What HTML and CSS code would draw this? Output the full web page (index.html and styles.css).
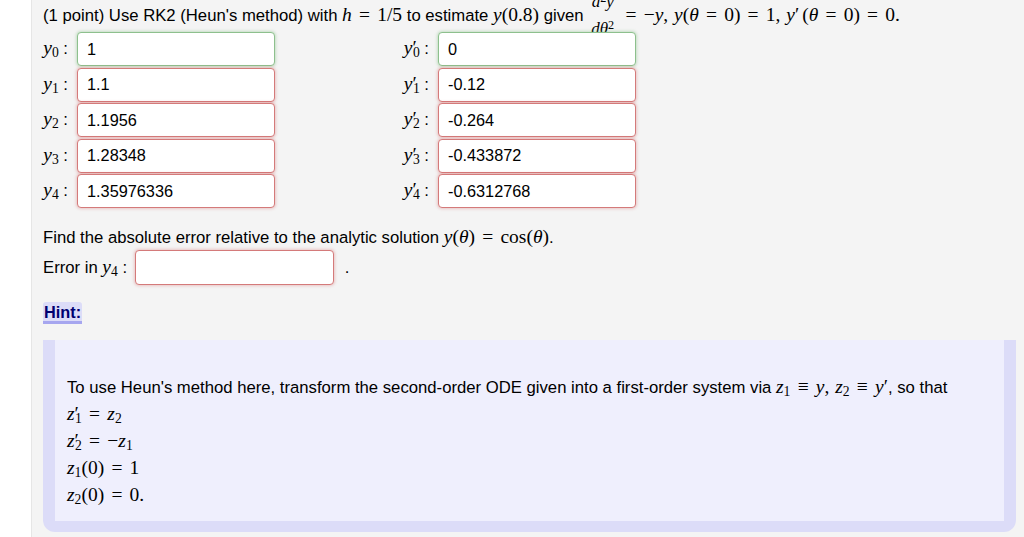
FILE: index.html
```html
<!DOCTYPE html>
<html>
<head>
<meta charset="utf-8">
<link rel="stylesheet" href="styles.css">
</head>
<body>
<div class="page">
  <p class="title">(1 point) Use RK2 (Heun's method) with <span class="m"><i>h</i><span class="rel">=</span>1/5</span> to estimate <span class="m"><i>y</i>(0.8)</span> given <span class="frac"><span><i>d</i><span class="sup">2</span><i>y</i></span><span><i>dθ</i><span class="sup">2</span></span></span><span class="m"><span class="rel">=</span>−<i>y</i>,<span class="th"></span><i>y</i>(<i>θ</i><span class="rel">=</span>0)<span class="rel">=</span>1,<span class="th"></span><i>y</i><span class="pm">′</span>(<i>θ</i><span class="rel">=</span>0)<span class="rel">=</span>0.</span></p>

  <div class="grid">
    <div class="lab"><span class="m"><i>y</i><span class="sub">0</span></span> :</div>
    <input class="fld ok" type="text" value="1">
    <div class="lab"><span class="m"><i>y</i>′<span class="sub pr">0</span></span> :</div>
    <input class="fld ok" type="text" value="0">

    <div class="lab"><span class="m"><i>y</i><span class="sub">1</span></span> :</div>
    <input class="fld bad" type="text" value="1.1">
    <div class="lab"><span class="m"><i>y</i>′<span class="sub pr">1</span></span> :</div>
    <input class="fld bad" type="text" value="-0.12">

    <div class="lab"><span class="m"><i>y</i><span class="sub">2</span></span> :</div>
    <input class="fld bad" type="text" value="1.1956">
    <div class="lab"><span class="m"><i>y</i>′<span class="sub pr">2</span></span> :</div>
    <input class="fld bad" type="text" value="-0.264">

    <div class="lab"><span class="m"><i>y</i><span class="sub">3</span></span> :</div>
    <input class="fld bad" type="text" value="1.28348">
    <div class="lab"><span class="m"><i>y</i>′<span class="sub pr">3</span></span> :</div>
    <input class="fld bad" type="text" value="-0.433872">

    <div class="lab"><span class="m"><i>y</i><span class="sub">4</span></span> :</div>
    <input class="fld bad" type="text" value="1.35976336">
    <div class="lab"><span class="m"><i>y</i>′<span class="sub pr">4</span></span> :</div>
    <input class="fld bad" type="text" value="-0.6312768">
  </div>

  <p class="find">Find the absolute error relative to the analytic solution <span class="m"><i>y</i>(<i>θ</i>)<span class="rel">=</span>cos(<i>θ</i>)</span>.</p>
  <p class="err">Error in <span class="m"><i>y</i><span class="sub">4</span></span> : <input class="fld bad wide" type="text" value=""><span class="dot">.</span></p>

  <div class="hint-wrap"><span class="hint">Hint:</span></div>

  <div class="hintbox">
    <div>To use Heun's method here, transform the second-order ODE given into a first-order system via <span class="m"><i>z</i><span class="sub">1</span><span class="rel">≡</span><i>y</i>,<span class="th"></span><i>z</i><span class="sub">2</span><span class="rel">≡</span><i>y</i>′</span>, so that</div>
    <div><span class="m"><i>z</i>′<span class="sub pr">1</span><span class="rel">=</span><i>z</i><span class="sub">2</span></span></div>
    <div><span class="m"><i>z</i>′<span class="sub pr">2</span><span class="rel">=</span>−<i>z</i><span class="sub">1</span></span></div>
    <div><span class="m"><i>z</i><span class="sub">1</span>(0)<span class="rel">=</span>1</span></div>
    <div><span class="m"><i>z</i><span class="sub">2</span>(0)<span class="rel">=</span>0.</span></div>
  </div>
</div>
</body>
</html>
```

FILE: styles.css
```css
html, body {
  margin: 0;
  padding: 0;
}
body {
  background: #ffffff;
  font-family: "Liberation Sans", Arial, sans-serif;
  font-size: 16.7px;
  color: #000;
  overflow: hidden;
}
.page {
  margin-left: 31px;
  border-left: 1px solid #e6e6e6;
  background: #f4f4f4;
  height: 537px;
  box-sizing: border-box;
  padding: 5px 8px 0 11px;
}
.title {
  margin: 0;
  font-size: 16.7px;
  line-height: 20px;
  white-space: nowrap;
}
.m {
  font-family: "Liberation Serif", "Times New Roman", serif;
  font-size: 19.5px;
  line-height: 1;
  white-space: nowrap;
}
.m i, .frac i {
  font-style: italic;
}
.rel {
  margin: 0 0.37em;
}
.th {
  display: inline-block;
  width: 0.3em;
}
.pm {
  margin-right: 0.15em;
}
.sub {
  font-size: 0.7em;
  vertical-align: -0.22em;
  line-height: 0;
}
.sup {
  font-size: 0.72em;
  vertical-align: 0.42em;
  line-height: 0;
}
.pr {
  margin-left: -0.28em;
}
.frac {
  display: inline-flex;
  flex-direction: column;
  align-items: center;
  gap: 10px;
  vertical-align: 14.5px;
  margin: -16px 4px -16px 3px;
  font-family: "Liberation Serif", "Times New Roman", serif;
  font-size: 17px;
  line-height: 17px;
}
.grid {
  display: grid;
  grid-template-columns: 34px 198px 163px 198px;
  grid-auto-rows: 34px;
  row-gap: 1.5px;
  margin-top: 6px;
}
.lab {
  text-align: right;
  padding-right: 9px;
  line-height: 34px;
  white-space: nowrap;
}
.fld {
  box-sizing: border-box;
  width: 100%;
  height: 34px;
  margin: 0;
  padding: 0 0 0 9px;
  border: 1px solid;
  border-radius: 4px;
  background: #fff;
  font-family: "Liberation Sans", Arial, sans-serif;
  font-size: 16.3px;
  color: #000;
  outline: none;
}
.ok {
  border-color: #8dc08d;
  box-shadow: 0 0 3px 1px rgba(110, 180, 110, 0.35);
}
.bad {
  border-color: #d47a7a;
  box-shadow: 0 0 3px 1px rgba(210, 90, 90, 0.3);
}
.find {
  margin: 19px 0 0;
  line-height: 20px;
}
.err {
  margin: 2px 0 0;
  line-height: 20px;
  white-space: nowrap;
}
.wide {
  width: 199px;
  height: 35px;
  margin-left: 3px;
}
.dot {
  margin-left: 11px;
}
.hint-wrap {
  margin-top: 17px;
  line-height: 0;
}
.hint {
  display: inline-block;
  background: #dcdcf8;
  color: #000070;
  font-weight: bold;
  font-size: 16.3px;
  padding: 2px 1px 0;
  line-height: 17px;
  border-bottom: 3px solid #a6a6ef;
  border-radius: 3px 3px 0 0;
}
.hintbox {
  margin-top: 16px;
  background: #efeffd;
  border: 12px solid #dcdcf8;
  border-top: 0;
  border-bottom-width: 11px;
  border-radius: 0 0 12px 12px;
  padding: 34px 12px 12px;
  line-height: 27px;
}
```
